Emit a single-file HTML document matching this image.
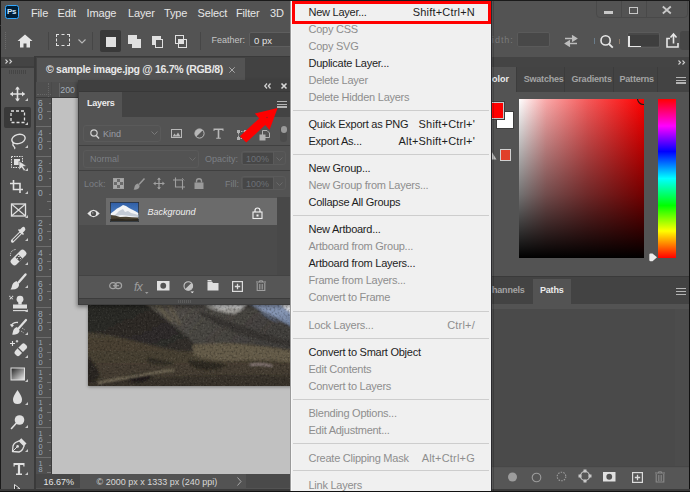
<!DOCTYPE html>
<html><head><meta charset="utf-8"><style>
*{margin:0;padding:0;box-sizing:border-box}
html,body{width:690px;height:492px;overflow:hidden;background:#535353;font-family:"Liberation Sans",sans-serif}
.a{position:absolute}
.t{position:absolute;white-space:nowrap;line-height:1}
svg{position:absolute;overflow:visible}
</style></head><body>
<div class="a" style="left:0;top:0;width:690px;height:25px;background:#535353"></div>
<div class="a" style="left:0;top:0;width:690px;height:1px;background:#1a1a1a"></div>
<div class="a" style="left:0;top:0;width:1px;height:492px;background:#1a1a1a"></div>
<div class="a" style="left:0;top:25px;width:690px;height:1px;background:#3c3c3c"></div>
<div class="a" style="left:1px;top:25px;width:689px;height:31px;background:#535353"></div>
<div class="a" style="left:1px;top:56px;width:689px;height:1px;background:#3a3a3a"></div>
<div class="a" style="left:5px;top:5px;width:14px;height:14px;border:1.2px solid #31a8ff;border-radius:2.5px;background:#001e36"></div>
<div class="t" style="left:7px;top:8px;font-size:8px;font-weight:bold;color:#d0e8ff;letter-spacing:-0.3px">Ps</div>
<div class="t" style="left:31px;top:8px;font-size:11px;color:#e6e6e6;letter-spacing:-0.15px">File</div>
<div class="t" style="left:57.5px;top:8px;font-size:11px;color:#e6e6e6;letter-spacing:-0.15px">Edit</div>
<div class="t" style="left:86.5px;top:8px;font-size:11px;color:#e6e6e6;letter-spacing:-0.15px">Image</div>
<div class="t" style="left:128px;top:8px;font-size:11px;color:#e6e6e6;letter-spacing:-0.15px">Layer</div>
<div class="t" style="left:164px;top:8px;font-size:11px;color:#e6e6e6;letter-spacing:-0.15px">Type</div>
<div class="t" style="left:197.5px;top:8px;font-size:11px;color:#e6e6e6;letter-spacing:-0.15px">Select</div>
<div class="t" style="left:236px;top:8px;font-size:11px;color:#e6e6e6;letter-spacing:-0.15px">Filter</div>
<div class="t" style="left:270px;top:8px;font-size:11px;color:#e6e6e6;letter-spacing:-0.15px">3D</div>
<div class="a" style="left:595.5px;top:-5px;width:92px;height:22.5px;border:1px solid #494949;border-radius:4px"></div>
<div class="a" style="left:621px;top:0;width:1px;height:17px;background:#494949"></div>
<div class="a" style="left:645.5px;top:0;width:1px;height:17px;background:#494949"></div>
<div class="a" style="left:603.5px;top:11px;width:9px;height:2.8px;background:#c8c8c8"></div>
<div class="a" style="left:629px;top:6.5px;width:9px;height:7.3px;border:1.6px solid #c8c8c8"></div>
<svg style="left:662px;top:5.5px" width="10" height="8"><path d="M0.8 0.5L8.8 7.5M8.8 0.5L0.8 7.5" stroke="#c8c8c8" stroke-width="1.8"/></svg>
<div class="a" style="left:5px;top:32px;width:2px;height:17px;border-left:1px dotted #6a6a6a"></div>
<svg style="left:17px;top:34px" width="16" height="14"><path d="M8 0.5L0.5 7H3V13.5H6.5V9.5H9.5V13.5H13V7H15.5Z" fill="#e6e6e6"/></svg>
<div class="a" style="left:48px;top:32px;width:1px;height:18px;background:#464646"></div>
<div class="a" style="left:56px;top:34px;width:14px;height:12px;border:1.3px dashed #e0e0e0"></div>
<svg style="left:78px;top:39px" width="8" height="5"><path d="M0.5 0.5L4 4L7.5 0.5" stroke="#b8b8b8" fill="none" stroke-width="1.1"/></svg>
<div class="a" style="left:92px;top:32px;width:1px;height:18px;background:#464646"></div>
<div class="a" style="left:100px;top:30px;width:21px;height:22px;background:#393939;border-radius:2px"></div>
<div class="a" style="left:106px;top:37px;width:10px;height:10px;background:#e0e0e0"></div>
<div class="a" style="left:128px;top:35px;width:9px;height:9px;background:#e0e0e0"></div>
<div class="a" style="left:132px;top:39px;width:9px;height:9px;background:#e0e0e0"></div>
<div class="a" style="left:152px;top:36px;width:9px;height:9px;background:#e0e0e0"></div>
<div class="a" style="left:155px;top:39px;width:8px;height:9px;background:#535353;border:1.3px solid #e0e0e0"></div>
<div class="a" style="left:175px;top:35px;width:9px;height:9px;border:1.2px solid #e0e0e0"></div>
<div class="a" style="left:178px;top:39px;width:9px;height:9px;border:1.2px solid #e0e0e0"></div>
<div class="a" style="left:178px;top:39px;width:6px;height:5px;background:#e0e0e0"></div>
<div class="a" style="left:200px;top:32px;width:1px;height:18px;background:#464646"></div>
<div class="t" style="left:211.5px;top:36.3px;font-size:9px;color:#c4c4c4">Feather:</div>
<div class="a" style="left:249.3px;top:31.8px;width:50px;height:15.5px;background:#484848;border:1px solid #5e5e5e;border-radius:2px"></div>
<div class="t" style="left:254px;top:36px;font-size:9.5px;color:#e4e4e4">0 px</div>
<div class="t" style="left:482.7px;top:36.3px;font-size:9px;color:#7a7a7a;letter-spacing:0.9px">Width:</div>
<div class="a" style="left:517px;top:32.4px;width:33px;height:14.8px;background:#484848;border:1px solid #5a5a5a;border-radius:2px"></div>
<svg style="left:564px;top:35px" width="14" height="12"><path d="M1 3.5H10M8 0.5L12.5 3.5L8 6.5M13 8.5H4M6 5.5L1.5 8.5L6 11.5" stroke="#bdbdbd" fill="#bdbdbd" stroke-width="1.5"/></svg>
<div class="a" style="left:594px;top:38px;width:1px;height:6px;background:#6a7c8a"></div>
<svg style="left:600px;top:35px" width="14" height="14"><circle cx="5.6" cy="5.4" r="4.6" stroke="#e6e6e6" stroke-width="1.6" fill="none"/><path d="M9 9L12.8 12.6" stroke="#e6e6e6" stroke-width="1.8"/></svg>
<div class="a" style="left:619px;top:39px;width:1px;height:5px;background:#8a7a6a"></div>
<div class="a" style="left:627px;top:32px;width:33px;height:16px;background:#484848;border:1px solid #5a5a5a;border-radius:2px"></div>
<div class="a" style="left:630px;top:35px;width:29px;height:11px;background:#3e3e3e"></div>
<div class="a" style="left:628px;top:36px;width:1.5px;height:11px;background:#e6e6e6"></div>
<div class="a" style="left:628px;top:45.5px;width:13px;height:1.5px;background:#e6e6e6"></div>
<svg style="left:666px;top:33px" width="13" height="15"><path d="M4 5.5H1V14H12V10" stroke="#e6e6e6" stroke-width="1.6" fill="none"/><path d="M7.5 10.5V2M4.5 4.5L7.5 1L10.5 4.5" stroke="#e6e6e6" stroke-width="1.6" fill="none"/></svg>
<div class="a" style="left:680px;top:31px;width:14px;height:19px;background:#474747;border-radius:3px"></div>
<div class="a" style="left:1px;top:56px;width:33px;height:436px;background:#535353"></div>
<div class="a" style="left:1px;top:57px;width:33px;height:9.2px;background:#444444"></div>
<svg style="left:5px;top:59.3px" width="8" height="5"><path d="M0.5 0.5L2.5 2.5L0.5 4.5M4.5 0.5L6.5 2.5L4.5 4.5" stroke="#d0d0d0" fill="none" stroke-width="1.1"/></svg>
<div class="a" style="left:1px;top:66.2px;width:33px;height:1.6px;background:#3e3e3e"></div>
<div class="a" style="left:9px;top:70.4px;width:17.5px;height:3.4px;background:repeating-linear-gradient(90deg,#454545 0 1px,transparent 1px 2px)"></div>
<div class="a" style="left:34px;top:56px;width:2px;height:436px;background:#3a3a3a"></div>
<div class="a" style="left:4px;top:107px;width:27px;height:21px;background:#393939;border-radius:2px"></div>
<svg style="left:0;top:0" width="36" height="492"><path d="M17.5 87V101M10.5 94H24.5" stroke="#e0e0e0" stroke-width="1.6"/><path d="M17.5 86.5L15 89.5H20ZM17.5 101.5L15 98.5H20ZM10 94L13 91.5V96.5ZM25 94L22 91.5V96.5Z" fill="#e0e0e0"/><path d="M28 101L28 98L25 101Z" fill="#c8c8c8"/><rect x="11" y="111" width="13.5" height="11.5" stroke="#e0e0e0" stroke-width="1.3" fill="none" stroke-dasharray="3 2"/><path d="M28 125L28 122L25 125Z" fill="#c8c8c8"/><ellipse cx="18.5" cy="139" rx="6.8" ry="4.6" stroke="#e0e0e0" stroke-width="1.4" fill="none" transform="rotate(-15 18.5 139)"/><path d="M13.5 142.5Q12 145 14 146.5Q15.5 148 14.5 149" stroke="#e0e0e0" stroke-width="1.3" fill="none"/><path d="M28 148L28 145L25 148Z" fill="#c8c8c8"/><rect x="11.5" y="156.5" width="11" height="11" stroke="#e0e0e0" stroke-width="1" fill="none" stroke-dasharray="1.5 1"/><rect x="14" y="159" width="6" height="6" fill="#e0e0e0"/><path d="M19 161L19 170L21.5 167.5L24 171L25.5 170L23.2 166.5L26.5 166Z" fill="#e0e0e0" stroke="#535353" stroke-width="0.6"/><path d="M28 171L28 168L25 171Z" fill="#c8c8c8"/><path d="M13.5 180V189.5H23M10 183.5H20V193" stroke="#e0e0e0" stroke-width="1.6" fill="none"/><path d="M28 194L28 191L25 194Z" fill="#c8c8c8"/><rect x="11.5" y="204" width="14" height="12" stroke="#e0e0e0" stroke-width="1.3" fill="none"/><path d="M11.5 204L25.5 216M25.5 204L11.5 216" stroke="#e0e0e0" stroke-width="1.1"/><path d="M28 218L28 215L25 218Z" fill="#c8c8c8"/><path d="M12.5 241L21 232.5" stroke="#e0e0e0" stroke-width="3.2" stroke-linecap="round"/><path d="M13 240.5L20.5 233" stroke="#535353" stroke-width="1.2"/><path d="M19 230.5L22 227.5Q24 226 25 228Q26 230 24.5 231L21.5 234Z" fill="#e0e0e0"/><path d="M18.5 229.5L23.5 234.5" stroke="#e0e0e0" stroke-width="1.6"/><path d="M28 241L28 238L25 241Z" fill="#c8c8c8"/><path d="M11.5 259.5L20.5 250.5Q22.5 248.5 24.5 250.5L25.5 251.5Q27.5 253.5 25.5 255.5L16.5 264.5Q14.5 266.5 12.5 264.5L11.5 263.5Q9.5 261.5 11.5 259.5Z" fill="#e0e0e0"/><path d="M15.5 257.5L18.5 254.5L22.5 258.5L19.5 261.5Z" fill="#535353"/><circle cx="18.5" cy="256.5" r="0.6" fill="#e0e0e0"/><circle cx="20.5" cy="258.5" r="0.6" fill="#e0e0e0"/><circle cx="17.5" cy="258.5" r="0.6" fill="#e0e0e0"/><circle cx="19.5" cy="256.3" r="0.5" fill="#e0e0e0"/><path d="M10.5 256Q10 250.5 15.5 249.5" stroke="#e0e0e0" stroke-width="1" stroke-dasharray="1 1" fill="none"/><path d="M28 265L28 262L25 265Z" fill="#c8c8c8"/><path d="M25.5 274.5L18.5 282.5" stroke="#e0e0e0" stroke-width="2.4" stroke-linecap="round"/><path d="M16.5 281Q12.5 282.5 12 286Q11.5 288.5 10.5 289.5Q15 290 17.5 288Q19.5 286 19 284Z" fill="#e0e0e0"/><path d="M28 288L28 285L25 288Z" fill="#c8c8c8"/><circle cx="20" cy="299.2" r="3.4" fill="#e0e0e0"/><path d="M18.3 301.5H21.7V304.5H18.3Z" fill="#e0e0e0"/><path d="M13 304.5H27V308.5H13Z" fill="#e0e0e0" /><path d="M13 310.6H27" stroke="#e0e0e0" stroke-width="1.1"/><path d="M9.5 296L13 299.5M13 296L9.5 299.5" stroke="#e0e0e0" stroke-width="1.2" stroke-dasharray="1 0.6"/><path d="M28 312L28 309L25 312Z" fill="#c8c8c8"/><path d="M26 320L18.5 328.5" stroke="#e0e0e0" stroke-width="2.2" stroke-linecap="round"/><path d="M17 327Q13.5 328 13 331.5Q12.5 334 12 334.5Q16 335 18 333.5Q20 331.5 19.5 330Z" fill="#e0e0e0"/><path d="M11 326Q13 322 18 322.5" stroke="#e0e0e0" stroke-width="1.3" fill="none"/><path d="M10 324L12 327.5L14 325Z" fill="#e0e0e0"/><path d="M21 331L24 333M22 328L25 330" stroke="#e0e0e0" stroke-width="0.8" stroke-dasharray="1 1"/><path d="M28 335L28 332L25 335Z" fill="#c8c8c8"/><path d="M16 350L22 344Q23.5 342.5 25 344L26.5 345.5Q28 347 26.5 348.5L19.5 355.5Q18 357 16.5 355.5L15 354Q13.5 352.5 16 350Z" fill="#e0e0e0"/><path d="M18 348L23 353" stroke="#535353" stroke-width="1.2"/><path d="M12.5 341V346M10 343.5H15M17 340V342.5M15.8 341.2H18.2" stroke="#e0e0e0" stroke-width="1.1"/><path d="M28 358L28 355L25 358Z" fill="#c8c8c8"/><defs><linearGradient id="gr" x1="0" y1="0" x2="1" y2="1"><stop offset="0" stop-color="#202020"/><stop offset="1" stop-color="#f0f0f0"/></linearGradient></defs><rect x="11" y="368" width="13.5" height="12" fill="url(#gr)" stroke="#e0e0e0" stroke-width="1"/><path d="M28 382L28 379L25 382Z" fill="#c8c8c8"/><path d="M17.5 390Q13 396.5 13 399.5Q13 404 17.5 404Q22 404 22 399.5Q22 396.5 17.5 390Z" fill="#e0e0e0"/><path d="M28 405L28 402L25 405Z" fill="#c8c8c8"/><circle cx="19.5" cy="420" r="4.8" fill="#e0e0e0"/><path d="M16 423.5L11.5 428.5" stroke="#e0e0e0" stroke-width="1.6" stroke-linecap="round"/><path d="M28 428L28 425L25 428Z" fill="#c8c8c8"/><path d="M12.5 451.5L13 446Q13.5 444 15.5 442.5L19.2 440.8L24.2 445.8L22.5 449.5Q21 451.5 19 452Z" fill="none" stroke="#e0e0e0" stroke-width="1.3" stroke-linejoin="round"/><path d="M12.8 451.2L17 447" stroke="#e0e0e0" stroke-width="1"/><circle cx="17.6" cy="446.4" r="1.3" fill="#e0e0e0"/><path d="M19 440.5L21.3 438.2L26.5 443.4L24.2 445.7Z" fill="#e0e0e0"/><path d="M28 452L28 449L25 452Z" fill="#c8c8c8"/><path d="M13.5 463H24.5V466.5H23.3V464.9H20.1V473.4H22V475H16V473.4H17.9V464.9H14.7V466.5H13.5Z" fill="#e0e0e0"/><path d="M28 475L28 472L25 475Z" fill="#c8c8c8"/><path d="M14.5 484.5V491L16.3 489.3L17.8 492L19 491.4L17.6 488.8H20Z" fill="#3a3a3a" stroke="#e0e0e0" stroke-width="1"/></svg>
<div class="a" style="left:36px;top:57px;width:455px;height:25px;background:#424242"></div>
<div class="a" style="left:36.8px;top:57.5px;width:208.2px;height:24.5px;background:#535353"></div>
<div class="t" style="left:46px;top:64.2px;font-size:10.5px;font-weight:bold;color:#e8e8e8;letter-spacing:-0.28px">&#169; sample image.jpg @ 16.7% (RGB/8)</div>
<svg style="left:229px;top:66.5px" width="6" height="6"><path d="M0.3 0.3L5.7 5.7M5.7 0.3L0.3 5.7" stroke="#a8a8a8" stroke-width="1"/></svg>
<div class="a" style="left:36px;top:82px;width:260px;height:15px;background:#4f4f4f"></div>
<div class="a" style="left:36px;top:97px;width:16px;height:377px;background:#4f4f4f"></div>
<div class="a" style="left:36px;top:97px;width:260px;height:1px;background:#3c3c3c"></div>
<div class="a" style="left:51px;top:98px;width:1px;height:376px;background:#3c3c3c"></div>
<div class="a" style="left:51px;top:82px;width:1px;height:15px;background:#4a4a4a"></div>
<div class="a" style="left:58.5px;top:83px;width:1px;height:14px;background:#646464"></div>
<div class="t" style="left:60.3px;top:86.3px;font-size:8.8px;color:#a4aeb8">200</div>
<div class="a" style="left:36px;top:95.5px;width:15px;height:1px;background:#6e6e6e"></div>
<div class="a" style="left:48.5px;top:103.0px;width:2.5px;height:1px;background:#767676"></div>
<div class="a" style="left:47px;top:110.6px;width:4px;height:1px;background:#767676"></div>
<div class="a" style="left:48.5px;top:118.1px;width:2.5px;height:1px;background:#767676"></div>
<div class="t" style="left:38px;top:98.7px;font-size:8.5px;color:#98a6b6">6</div>
<div class="t" style="left:38px;top:106.0px;font-size:8.5px;color:#98a6b6">0</div>
<div class="t" style="left:38px;top:113.3px;font-size:8.5px;color:#98a6b6">0</div>
<div class="a" style="left:36px;top:125.6px;width:15px;height:1px;background:#6e6e6e"></div>
<div class="a" style="left:48.5px;top:133.2px;width:2.5px;height:1px;background:#767676"></div>
<div class="a" style="left:47px;top:140.7px;width:4px;height:1px;background:#767676"></div>
<div class="a" style="left:48.5px;top:148.2px;width:2.5px;height:1px;background:#767676"></div>
<div class="t" style="left:38px;top:128.8px;font-size:8.5px;color:#98a6b6">4</div>
<div class="t" style="left:38px;top:136.1px;font-size:8.5px;color:#98a6b6">0</div>
<div class="t" style="left:38px;top:143.4px;font-size:8.5px;color:#98a6b6">0</div>
<div class="a" style="left:36px;top:155.8px;width:15px;height:1px;background:#6e6e6e"></div>
<div class="a" style="left:48.5px;top:163.3px;width:2.5px;height:1px;background:#767676"></div>
<div class="a" style="left:47px;top:170.8px;width:4px;height:1px;background:#767676"></div>
<div class="a" style="left:48.5px;top:178.4px;width:2.5px;height:1px;background:#767676"></div>
<div class="t" style="left:38px;top:159.0px;font-size:8.5px;color:#98a6b6">2</div>
<div class="t" style="left:38px;top:166.3px;font-size:8.5px;color:#98a6b6">0</div>
<div class="t" style="left:38px;top:173.6px;font-size:8.5px;color:#98a6b6">0</div>
<div class="a" style="left:36px;top:185.9px;width:15px;height:1px;background:#6e6e6e"></div>
<div class="a" style="left:48.5px;top:193.5px;width:2.5px;height:1px;background:#767676"></div>
<div class="a" style="left:47px;top:201.0px;width:4px;height:1px;background:#767676"></div>
<div class="a" style="left:48.5px;top:208.5px;width:2.5px;height:1px;background:#767676"></div>
<div class="t" style="left:38px;top:189.1px;font-size:8.5px;color:#98a6b6">0</div>
<div class="a" style="left:36px;top:216.1px;width:15px;height:1px;background:#6e6e6e"></div>
<div class="a" style="left:48.5px;top:223.6px;width:2.5px;height:1px;background:#767676"></div>
<div class="a" style="left:47px;top:231.1px;width:4px;height:1px;background:#767676"></div>
<div class="a" style="left:48.5px;top:238.7px;width:2.5px;height:1px;background:#767676"></div>
<div class="t" style="left:38px;top:219.3px;font-size:8.5px;color:#98a6b6">2</div>
<div class="t" style="left:38px;top:226.6px;font-size:8.5px;color:#98a6b6">0</div>
<div class="t" style="left:38px;top:233.9px;font-size:8.5px;color:#98a6b6">0</div>
<div class="a" style="left:36px;top:246.2px;width:15px;height:1px;background:#6e6e6e"></div>
<div class="a" style="left:48.5px;top:253.7px;width:2.5px;height:1px;background:#767676"></div>
<div class="a" style="left:47px;top:261.3px;width:4px;height:1px;background:#767676"></div>
<div class="a" style="left:48.5px;top:268.8px;width:2.5px;height:1px;background:#767676"></div>
<div class="t" style="left:38px;top:249.4px;font-size:8.5px;color:#98a6b6">4</div>
<div class="t" style="left:38px;top:256.7px;font-size:8.5px;color:#98a6b6">0</div>
<div class="t" style="left:38px;top:264.0px;font-size:8.5px;color:#98a6b6">0</div>
<div class="a" style="left:36px;top:276.3px;width:15px;height:1px;background:#6e6e6e"></div>
<div class="a" style="left:48.5px;top:283.9px;width:2.5px;height:1px;background:#767676"></div>
<div class="a" style="left:47px;top:291.4px;width:4px;height:1px;background:#767676"></div>
<div class="a" style="left:48.5px;top:298.9px;width:2.5px;height:1px;background:#767676"></div>
<div class="t" style="left:38px;top:279.5px;font-size:8.5px;color:#98a6b6">6</div>
<div class="t" style="left:38px;top:286.8px;font-size:8.5px;color:#98a6b6">0</div>
<div class="t" style="left:38px;top:294.1px;font-size:8.5px;color:#98a6b6">0</div>
<div class="a" style="left:36px;top:306.5px;width:15px;height:1px;background:#6e6e6e"></div>
<div class="a" style="left:48.5px;top:314.0px;width:2.5px;height:1px;background:#767676"></div>
<div class="a" style="left:47px;top:321.6px;width:4px;height:1px;background:#767676"></div>
<div class="a" style="left:48.5px;top:329.1px;width:2.5px;height:1px;background:#767676"></div>
<div class="t" style="left:38px;top:309.7px;font-size:8.5px;color:#98a6b6">8</div>
<div class="t" style="left:38px;top:317.0px;font-size:8.5px;color:#98a6b6">0</div>
<div class="t" style="left:38px;top:324.3px;font-size:8.5px;color:#98a6b6">0</div>
<div class="a" style="left:36px;top:336.6px;width:15px;height:1px;background:#6e6e6e"></div>
<div class="a" style="left:48.5px;top:344.2px;width:2.5px;height:1px;background:#767676"></div>
<div class="a" style="left:47px;top:351.7px;width:4px;height:1px;background:#767676"></div>
<div class="a" style="left:48.5px;top:359.2px;width:2.5px;height:1px;background:#767676"></div>
<div class="t" style="left:38.5px;top:339.1px;font-size:7.5px;color:#98a6b6">1</div>
<div class="t" style="left:38.5px;top:345.7px;font-size:7.5px;color:#98a6b6">0</div>
<div class="t" style="left:38.5px;top:352.3px;font-size:7.5px;color:#98a6b6">0</div>
<div class="t" style="left:38.5px;top:358.9px;font-size:7.5px;color:#98a6b6">0</div>
<div class="a" style="left:36px;top:366.8px;width:15px;height:1px;background:#6e6e6e"></div>
<div class="a" style="left:48.5px;top:374.3px;width:2.5px;height:1px;background:#767676"></div>
<div class="a" style="left:47px;top:381.8px;width:4px;height:1px;background:#767676"></div>
<div class="a" style="left:48.5px;top:389.4px;width:2.5px;height:1px;background:#767676"></div>
<div class="t" style="left:38.5px;top:369.3px;font-size:7.5px;color:#98a6b6">1</div>
<div class="t" style="left:38.5px;top:375.9px;font-size:7.5px;color:#98a6b6">2</div>
<div class="t" style="left:38.5px;top:382.5px;font-size:7.5px;color:#98a6b6">0</div>
<div class="t" style="left:38.5px;top:389.1px;font-size:7.5px;color:#98a6b6">0</div>
<div class="a" style="left:36px;top:396.9px;width:15px;height:1px;background:#6e6e6e"></div>
<div class="a" style="left:48.5px;top:404.4px;width:2.5px;height:1px;background:#767676"></div>
<div class="a" style="left:47px;top:412.0px;width:4px;height:1px;background:#767676"></div>
<div class="a" style="left:48.5px;top:419.5px;width:2.5px;height:1px;background:#767676"></div>
<div class="t" style="left:38.5px;top:399.4px;font-size:7.5px;color:#98a6b6">1</div>
<div class="t" style="left:38.5px;top:406.0px;font-size:7.5px;color:#98a6b6">4</div>
<div class="t" style="left:38.5px;top:412.6px;font-size:7.5px;color:#98a6b6">0</div>
<div class="t" style="left:38.5px;top:419.2px;font-size:7.5px;color:#98a6b6">0</div>
<div class="a" style="left:36px;top:427.0px;width:15px;height:1px;background:#6e6e6e"></div>
<div class="a" style="left:48.5px;top:434.6px;width:2.5px;height:1px;background:#767676"></div>
<div class="a" style="left:47px;top:442.1px;width:4px;height:1px;background:#767676"></div>
<div class="a" style="left:48.5px;top:449.6px;width:2.5px;height:1px;background:#767676"></div>
<div class="t" style="left:38.5px;top:429.5px;font-size:7.5px;color:#98a6b6">1</div>
<div class="t" style="left:38.5px;top:436.1px;font-size:7.5px;color:#98a6b6">6</div>
<div class="t" style="left:38.5px;top:442.7px;font-size:7.5px;color:#98a6b6">0</div>
<div class="t" style="left:38.5px;top:449.3px;font-size:7.5px;color:#98a6b6">0</div>
<div class="a" style="left:36px;top:457.2px;width:15px;height:1px;background:#6e6e6e"></div>
<div class="a" style="left:48.5px;top:464.7px;width:2.5px;height:1px;background:#767676"></div>
<div class="a" style="left:47px;top:472.2px;width:4px;height:1px;background:#767676"></div>
<div class="a" style="left:48.5px;top:479.8px;width:2.5px;height:1px;background:#767676"></div>
<div class="t" style="left:38.5px;top:459.7px;font-size:7.5px;color:#98a6b6">1</div>
<div class="t" style="left:38.5px;top:466.3px;font-size:7.5px;color:#98a6b6">8</div>
<div class="t" style="left:38.5px;top:472.9px;font-size:7.5px;color:#98a6b6">0</div>
<div class="t" style="left:38.5px;top:479.5px;font-size:7.5px;color:#98a6b6">0</div>
<div class="a" style="left:36px;top:82px;width:15px;height:15px;background:#4f4f4f"></div>
<div class="a" style="left:37px;top:94px;width:14px;height:1px;border-top:1px dotted #666"></div>
<div class="a" style="left:48px;top:83px;width:1px;height:14px;border-left:1px dotted #666"></div>
<div class="a" style="left:52px;top:98px;width:240px;height:376.4px;background:#c1c1c1"></div>
<div class="a" style="left:88px;top:305px;width:205px;height:81px;box-shadow:0 1px 3px rgba(0,0,0,.35)"></div>
<svg style="left:88px;top:305px" width="205" height="81" viewBox="0 0 205 81">
<defs>
<linearGradient id="gm" x1="0" y1="0" x2="1" y2="0.3"><stop offset="0" stop-color="#5a554b"/><stop offset="0.5" stop-color="#4a4743"/><stop offset="1" stop-color="#42403d"/></linearGradient>
<linearGradient id="gd" x1="0" y1="0" x2="1" y2="1"><stop offset="0" stop-color="#2a2927"/><stop offset="1" stop-color="#312e2a"/></linearGradient>
<linearGradient id="gb" x1="0" y1="0" x2="0" y2="1"><stop offset="0" stop-color="#98a8c8"/><stop offset="1" stop-color="#6a7a96"/></linearGradient>
<linearGradient id="gg" x1="0" y1="0" x2="0" y2="1"><stop offset="0" stop-color="#4f4737"/><stop offset="1" stop-color="#423b2f"/></linearGradient>
<filter id="nz" x="0" y="0" width="100%" height="100%"><feTurbulence type="fractalNoise" baseFrequency="0.5" numOctaves="2" seed="11"/><feColorMatrix values="0 0 0 0 0  0 0 0 0 0  0 0 0 0 0  0 0 0 -2.6 1.45"/></filter>
<filter id="nw" x="0" y="0" width="100%" height="100%"><feTurbulence type="fractalNoise" baseFrequency="0.6" numOctaves="2" seed="4"/><feColorMatrix values="0 0 0 0 1  0 0 0 0 1  0 0 0 0 0.9  0 0 0 2.6 -1.45"/></filter>
<filter id="bl" x="-5%" y="-5%" width="110%" height="110%"><feGaussianBlur stdDeviation="0.9"/></filter>
<clipPath id="cp"><rect width="205" height="81"/></clipPath>
</defs>
<g clip-path="url(#cp)"><g filter="url(#bl)">
<rect x="-5" y="-5" width="215" height="91" fill="url(#gg)"/>
<path d="M52 -5H210V46Q175 40 140 38Q118 39 106 39Q80 15 52 -5Z" fill="url(#gm)"/>
<path d="M64 -3L70 -3L86 17L82 17Z" fill="#625b4c"/>
<path d="M76 -3L82 -3L94 20L90 20Z" fill="#5f594b"/>
<path d="M112 6Q135 14 165 25Q188 33 210 38V44Q180 37 160 32Q130 22 110 8Z" fill="#383633"/>
<path d="M-5 -5H52Q80 15 103 35Q109 41 108 46Q95 47 75 43Q50 37 25 31Q10 28 -5 27Z" fill="url(#gd)"/>
<path d="M104 40Q125 37 150 39Q185 42 210 47V58Q175 54 140 56Q115 55 106 50Z" fill="#655c49"/>
<path d="M114 -5H162Q156 6 146 9Q134 8 124 4Q116 1 114 -5Z" fill="#9d9b97"/>
<path d="M120 -2Q128 3 136 4Q144 3 150 -1Z" fill="#d4d4d4"/>
<path d="M140 1Q146 4 152 3Q156 1 158 -2Z" fill="#e0e0e0"/>
<path d="M156 -5H210V25Q192 15 178 8Q165 1 156 -5Z" fill="url(#gb)"/>
<path d="M170 5Q182 11 192 18Q180 15 170 5Z" fill="#5a6780"/>
<path d="M189 -5H210V12Q198 6 189 -5Z" fill="#eef0f4"/>
<path d="M-5 47Q8 58 12 70Q8 78 -5 81Z" fill="#2a2620"/>
<path d="M100 55Q120 56 140 60Q130 66 115 65Q102 63 100 55Z" fill="#2e2a23"/>
<path d="M58 52Q75 55 88 58Q75 62 60 58Z" fill="#332e26"/>
<path d="M-5 77Q50 73 100 71Q150 69 210 71V86H-5Z" fill="#38322a"/>
<path d="M38 71Q52 67 64 69Q63 77 50 78Q40 78 38 71Z" fill="#221f1a"/>
<path d="M10 78Q35 73 60 69Q75 66 86 65" stroke="#8a806a" stroke-width="1.3" fill="none"/>
<path d="M162 60Q172 58 184 61" stroke="#a09090" stroke-width="1.6" fill="none"/>
</g><rect width="205" height="81" fill="#000" filter="url(#nz)" opacity="0.28"/><rect width="205" height="81" fill="#fff" filter="url(#nw)" opacity="0.12"/></g>
</svg>
<div class="a" style="left:36px;top:474.4px;width:260px;height:14px;background:#535353"></div>
<div class="a" style="left:36px;top:474.4px;width:44px;height:14px;background:#474747"></div>
<div class="a" style="left:245.8px;top:474.4px;width:50px;height:14px;background:#4a4a4a"></div>
<div class="t" style="left:43.5px;top:477.5px;font-size:9px;color:#e4e4e4">16.67%</div>
<div class="t" style="left:96.5px;top:477.5px;font-size:9px;color:#d8d8d8">&#169; 2000 px x 1333 px (240 ppi)</div>
<svg style="left:237px;top:477px" width="5" height="9"><path d="M0.5 0.5L4 4.5L0.5 8.5" stroke="#a8a8a8" fill="none"/></svg>
<div class="a" style="left:36px;top:489px;width:260px;height:3px;background:#3a3a3a"></div>
<div class="a" style="left:78px;top:79.5px;width:221px;height:225.2px;background:#535353;border-left:1px solid #3e3e3e;border-bottom:1px solid #3e3e3e;box-shadow:-1px 2px 4px rgba(0,0,0,.4)"></div>
<div class="a" style="left:79px;top:80px;width:220px;height:11px;background:#3f3f3f"></div>
<div class="a" style="left:79px;top:91px;width:220px;height:1px;background:#383838"></div>
<div class="a" style="left:79px;top:92px;width:220px;height:25px;background:#434343"></div>
<div class="a" style="left:79px;top:92px;width:43px;height:25px;background:#535353"></div>
<div class="t" style="left:87px;top:99.3px;font-size:9px;font-weight:bold;color:#ececec;letter-spacing:-0.25px">Layers</div>
<svg style="left:264px;top:83px" width="7" height="6"><path d="M3 0.5L0.8 3L3 5.5M6.5 0.5L4.3 3L6.5 5.5" stroke="#d0d0d0" fill="none" stroke-width="1.3"/></svg>
<svg style="left:281px;top:83px" width="6" height="6"><path d="M0.5 0.5L5.5 5.5M5.5 0.5L0.5 5.5" stroke="#d8d8d8" stroke-width="1.6"/></svg>
<div class="a" style="left:277px;top:101px;width:9.5px;height:7px;background:repeating-linear-gradient(180deg,#b4b4b4 0 1.2px,#434343 1.2px 2.75px)"></div>
<div class="a" style="left:82.5px;top:125px;width:78px;height:16.8px;border:1px solid #5a5a5a;border-radius:3px;background:#535353"></div>
<svg style="left:90px;top:129px" width="10" height="11"><circle cx="4" cy="4" r="3.2" stroke="#cfcfcf" stroke-width="1.2" fill="none"/><path d="M6.3 6.5L9 9.5" stroke="#cfcfcf" stroke-width="1.5"/></svg>
<div class="t" style="left:103px;top:129.5px;font-size:9px;color:#9a9ea4">Kind</div>
<svg style="left:151px;top:131px" width="7" height="5"><path d="M0.5 0.5L3.5 3.5L6.5 0.5" stroke="#7a7a7a" fill="none"/></svg>
<div class="a" style="left:171px;top:129px;width:11px;height:9px;border:1px solid #b8b8b8"></div>
<svg style="left:172px;top:132px" width="9" height="5"><path d="M0.5 4.5L2.5 1.5L4 3.5L6 0.5L8.5 4.5Z" fill="#b8b8b8"/></svg>
<svg style="left:194px;top:128px" width="11" height="11"><circle cx="5.5" cy="5.5" r="4.6" fill="#b8b8b8"/><path d="M8.8 2.2A4.6 4.6 0 0 1 2.2 8.8Z" fill="#535353"/><circle cx="5.5" cy="5.5" r="4.6" fill="none" stroke="#b8b8b8" stroke-width="1"/></svg>
<svg style="left:213px;top:128px" width="11" height="11"><path d="M0.5 0.5H10.5V3H9.5V2H6.3V9.8H7.8V10.8H3.2V9.8H4.7V2H1.5V3H0.5Z" fill="#b8b8b8"/></svg>
<svg style="left:237px;top:130px" width="10" height="10"><rect x="1.5" y="1.5" width="7" height="7" stroke="#b0b0b0" fill="none" stroke-dasharray="1.5 1"/><rect x="0" y="0" width="3" height="3" fill="#b0b0b0"/><rect x="7" y="0" width="3" height="3" fill="#b0b0b0"/><rect x="0" y="7" width="3" height="3" fill="#b0b0b0"/><rect x="7" y="7" width="3" height="3" fill="#b0b0b0"/></svg>
<svg style="left:259px;top:130px" width="11" height="11"><path d="M3.5 0.5H8L10.5 3V7.5H3.5Z" fill="none" stroke="#b0b0b0"/><rect x="0.5" y="4.5" width="6" height="6" fill="#b0b0b0"/></svg>
<div class="a" style="left:280px;top:125.5px;width:7px;height:16px;border-radius:3.5px;background:#4b4b4b"></div>
<div class="a" style="left:280.5px;top:126px;width:6.5px;height:6.5px;border-radius:50%;background:#9a9a9a"></div>
<div class="a" style="left:79px;top:145px;width:220px;height:1px;background:#404040"></div>
<div class="a" style="left:82.5px;top:150.3px;width:116px;height:17.5px;border:1px solid #5a5a5a;border-radius:3px"></div>
<div class="t" style="left:90px;top:154.5px;font-size:9px;color:#7c7f84">Normal</div>
<svg style="left:189px;top:157px" width="7" height="5"><path d="M0.5 0.5L3.5 3.5L6.5 0.5" stroke="#6a6a6a" fill="none"/></svg>
<div class="t" style="left:205px;top:155px;font-size:9px;color:#7c7f84">Opacity:</div>
<div class="a" style="left:240.6px;top:150.6px;width:45.8px;height:14.7px;border:1px solid #5a5a5a;border-radius:3px"></div>
<div class="a" style="left:242.6px;top:152.6px;width:30px;height:11.2px;background:#474747"></div>
<div class="a" style="left:273.3px;top:151.6px;width:1px;height:12.7px;background:#5a5a5a"></div>
<div class="t" style="left:246px;top:155px;font-size:9px;color:#6c7076">100%</div>
<svg style="left:276px;top:157px" width="7" height="5"><path d="M0.5 0.5L3.5 3.5L6.5 0.5" stroke="#6a6a6a" fill="none"/></svg>
<div class="a" style="left:79px;top:170px;width:220px;height:1px;background:#404040"></div>
<div class="t" style="left:84px;top:180px;font-size:9px;color:#7c7f84">Lock:</div>
<svg style="left:113px;top:178px" width="11" height="11"><rect x="0.5" y="0.5" width="10" height="10" fill="#6a6a6a" stroke="#a0a0a0"/><rect x="1" y="1" width="3" height="3" fill="#a8a8a8"/><rect x="7" y="1" width="3" height="3" fill="#a8a8a8"/><rect x="4" y="4" width="3" height="3" fill="#a8a8a8"/><rect x="1" y="7" width="3" height="3" fill="#a8a8a8"/><rect x="7" y="7" width="3" height="3" fill="#a8a8a8"/></svg>
<svg style="left:133px;top:178px" width="12" height="12"><path d="M11.5 0.5L6 6.5" stroke="#9a9a9a" stroke-width="1.5"/><path d="M5 5.5Q2 6 1.5 9Q1.2 11 0.5 11.5Q4 12 5.5 10.5Q7 9 6.5 7.5Z" fill="#9a9a9a"/></svg>
<svg style="left:153px;top:177px" width="12" height="13"><path d="M6 1V12M0.8 6.5H11.2" stroke="#a0a0a0" stroke-width="1.2"/><path d="M6 0.5L4 2.8H8ZM6 12.5L4 10.2H8ZM0.3 6.5L2.6 4.5V8.5ZM11.7 6.5L9.4 4.5V8.5Z" fill="#a0a0a0"/></svg>
<svg style="left:173px;top:177px" width="14" height="13"><path d="M2.5 0.5V10H12M0 3H9.5V12.5" stroke="#a0a0a0" stroke-width="1.1" fill="none"/><path d="M9 1L12 4" stroke="#a0a0a0" stroke-width="1" stroke-dasharray="1 1"/></svg>
<svg style="left:194px;top:178px" width="10" height="11"><path d="M2.5 4.5V3Q2.5 0.8 5 0.8Q7.5 0.8 7.5 3V4.5" stroke="#9a9a9a" stroke-width="1.4" fill="none"/><rect x="0.5" y="4.5" width="9" height="6.5" fill="#9a9a9a"/></svg>
<div class="t" style="left:225px;top:180px;font-size:9px;color:#7c7f84">Fill:</div>
<div class="a" style="left:240.6px;top:175.5px;width:45.8px;height:14.8px;border:1px solid #5a5a5a;border-radius:3px"></div>
<div class="a" style="left:242.6px;top:177.5px;width:30px;height:11.1px;background:#474747"></div>
<div class="a" style="left:273.3px;top:176.5px;width:1px;height:12.8px;background:#5a5a5a"></div>
<div class="t" style="left:246px;top:180.3px;font-size:9px;color:#6c7076">100%</div>
<svg style="left:276px;top:182px" width="7" height="5"><path d="M0.5 0.5L3.5 3.5L6.5 0.5" stroke="#6a6a6a" fill="none"/></svg>
<div class="a" style="left:79px;top:195px;width:220px;height:30px;background:#535353"></div>
<div class="a" style="left:79px;top:225px;width:220px;height:50px;background:#4b4b4b"></div>
<div class="a" style="left:276.5px;top:196.7px;width:14px;height:28.3px;background:#484848"></div>
<div class="a" style="left:276.5px;top:225px;width:14px;height:50px;background:#484848"></div>
<div class="a" style="left:106px;top:198px;width:170.5px;height:27px;background:#6b6b6b"></div>
<svg style="left:87px;top:208.5px" width="13" height="9"><path d="M0.3 4.5Q6.5 -2.8 12.7 4.5Q6.5 11.8 0.3 4.5Z" fill="#e4e4e4"/><circle cx="6.5" cy="4.5" r="2.6" fill="#4e4e4e"/><circle cx="5.8" cy="3.9" r="0.8" fill="#9a9a9a"/></svg>
<svg style="left:110px;top:202px" width="29" height="20" viewBox="0 0 29 20">
<defs><linearGradient id="sky" x1="0" y1="0" x2="0" y2="1"><stop offset="0" stop-color="#2f5fa6"/><stop offset="1" stop-color="#5f8fd0"/></linearGradient>
<filter id="tb"><feGaussianBlur stdDeviation="0.35"/></filter></defs>
<rect width="29" height="20" fill="#2a2a2a"/>
<g filter="url(#tb)">
<rect x="0.7" y="0.7" width="27.6" height="18.6" fill="url(#sky)"/>
<path d="M0.7 11.5L4 9L7 6.5L10 5L13 3L16 4L19 6L22 7.5L25 9L28.3 11V17L0.7 17Z" fill="#f2f4f6"/>
<path d="M9 9L13 7L15 10L18 9L21 11L25 12L28.3 13V15L20 14L12 13L4 14Z" fill="#c4ccd6"/>
<path d="M0.7 13L5 13.5L10 15L16 14.8L22 15.2L28.3 15.5V19.3H0.7Z" fill="#4a4233"/>
<path d="M0.7 17L8 16.5L16 17.5L28.3 17V19.3H0.7Z" fill="#2e2a22"/>
</g>
</svg>
<div class="t" style="left:147.5px;top:208px;font-size:9px;font-style:italic;color:#f0f0f0">Background</div>
<svg style="left:252px;top:207px" width="11" height="12"><path d="M3 5V3.5Q3 1 5.5 1Q8 1 8 3.5V5" stroke="#f0f0f0" stroke-width="1.2" fill="none"/><rect x="1" y="5" width="9" height="6.5" fill="none" stroke="#f0f0f0" stroke-width="1.1"/><rect x="4.5" y="7.5" width="2" height="2" fill="#f0f0f0"/></svg>
<div class="a" style="left:79px;top:275px;width:220px;height:1px;background:#434343"></div>
<div class="a" style="left:79px;top:276px;width:220px;height:21.5px;background:#565656"></div>
<div class="a" style="left:79px;top:297.5px;width:220px;height:1px;background:#3c3c3c"></div>
<div class="a" style="left:79px;top:298.5px;width:220px;height:5.5px;background:#4a4a4a"></div>
<div class="a" style="left:178px;top:299.5px;width:14px;height:3px;background:repeating-linear-gradient(90deg,#5c5c5c 0 1px,transparent 1px 2px)"></div>
<svg style="left:108.5px;top:281.8px" width="14" height="8"><rect x="0.7" y="0.7" width="6.6" height="6" rx="3" stroke="#a4a4a4" stroke-width="1.2" fill="none"/><rect x="5.8" y="0.7" width="6.8" height="6" rx="3" stroke="#a4a4a4" stroke-width="1.2" fill="none"/><path d="M4 3.7H10" stroke="#a4a4a4" stroke-width="1.1"/></svg>
<div class="t" style="left:134px;top:280.5px;font-size:12px;font-style:italic;color:#9c9c9c;letter-spacing:-0.5px">fx</div>
<svg style="left:145px;top:292px" width="4" height="3"><path d="M0 0H3.5L1.75 2Z" fill="#9c9c9c"/></svg>
<svg style="left:157px;top:281px" width="13" height="10"><rect x="0" y="0" width="12.5" height="9.5" fill="#e0e0e0"/><circle cx="6.25" cy="4.75" r="2.9" fill="#535353"/></svg>
<svg style="left:183px;top:281px" width="13" height="13"><circle cx="5.3" cy="5" r="4.3" fill="none" stroke="#c4c4c4" stroke-width="1.1"/><path d="M8.4 1.9A4.3 4.3 0 0 1 2.2 8.1Z" fill="#c4c4c4"/><path d="M7.5 10.5H11L9.25 12.2Z" fill="#e8e8e8"/></svg>
<svg style="left:207px;top:280px" width="12" height="11"><path d="M0.5 1.5H5L6 3H11.5V10.5H0.5Z" fill="#dedede"/><path d="M0.5 0.5H4.5" stroke="#dedede"/></svg>
<svg style="left:232px;top:280.5px" width="11" height="11"><rect x="0.6" y="0.6" width="9.8" height="9.8" fill="none" stroke="#dcdcdc" stroke-width="1.2"/><path d="M5.5 2.8V8.2M2.8 5.5H8.2" stroke="#dcdcdc" stroke-width="1.3"/></svg>
<svg style="left:256px;top:280px" width="10" height="11"><path d="M0 2H10M3.5 2V0.8H6.5V2" stroke="#a0a0a0" stroke-width="1" fill="none"/><path d="M1.2 3V10.5H8.8V3M3.8 4V9.5M6.2 4V9.5" stroke="#a0a0a0" stroke-width="1.1" fill="none"/></svg>
<svg style="left:0;top:0" width="690" height="492"><path d="M277.6 108.1L254.9 113.5L259.2 118.4L239.9 136.3L246.3 142.6L265.2 125.0L269.5 129.9Z" fill="#fe0000"/><circle cx="267" cy="117.5" r="0.7" fill="#8a2020"/></svg>
<div class="a" style="left:491px;top:56px;width:199px;height:436px;background:#535353"></div>
<div class="a" style="left:491px;top:57px;width:199px;height:10.4px;background:#444444"></div>
<svg style="left:677.5px;top:59.5px" width="8" height="5"><path d="M0.5 0.5L2.5 2.5L0.5 4.5M4.5 0.5L6.5 2.5L4.5 4.5" stroke="#d0d0d0" fill="none" stroke-width="1.1"/></svg>
<div class="a" style="left:491px;top:67.4px;width:199px;height:25px;background:#434343"></div>
<div class="a" style="left:491px;top:67.4px;width:25px;height:25px;background:#535353"></div>
<div class="a" style="left:564.2px;top:67.4px;width:1px;height:25px;background:#3c3c3c"></div>
<div class="a" style="left:612.5px;top:67.4px;width:1px;height:25px;background:#3c3c3c"></div>
<div class="a" style="left:656.5px;top:67.4px;width:1px;height:25px;background:#3c3c3c"></div>
<div class="a" style="left:516px;top:67.4px;width:1px;height:25px;background:#3c3c3c"></div>
<div class="t" style="left:485.5px;top:74.8px;font-size:9px;font-weight:bold;color:#ececec;letter-spacing:0px">Color</div>
<div class="t" style="left:523.7px;top:74.8px;font-size:9px;font-weight:bold;color:#a4a4a4;letter-spacing:-0.2px">Swatches</div>
<div class="t" style="left:571.5px;top:74.8px;font-size:9px;font-weight:bold;color:#a4a4a4;letter-spacing:-0.2px">Gradients</div>
<div class="t" style="left:619.5px;top:74.8px;font-size:9px;font-weight:bold;color:#a4a4a4;letter-spacing:-0.2px">Patterns</div>
<div class="a" style="left:676px;top:77px;width:9.5px;height:7px;background:repeating-linear-gradient(180deg,#b4b4b4 0 1.2px,#434343 1.2px 2.75px)"></div>
<div class="a" style="left:495.5px;top:111.2px;width:18px;height:17.5px;background:#ffffff;border:1px solid #3c3c3c"></div>
<div class="a" style="left:487px;top:102px;width:17px;height:16.5px;background:#ff0000;border:1px solid #c8c8c8;box-shadow:0 0 0 1px #3c3c3c"></div>
<div class="a" style="left:499.5px;top:149px;width:11.5px;height:11.5px;background:#e0402a;border:1px solid #d0d0d0"></div>
<svg style="left:489px;top:150px" width="8" height="10"><path d="M2 0.5L7.5 9.5H0Z" fill="#bcbcbc"/></svg>
<div class="a" style="left:519px;top:99px;width:124.5px;height:158.5px;background:linear-gradient(to top,#000 0%,rgba(0,0,0,0.55) 40%,rgba(0,0,0,0) 100%),linear-gradient(to right,#fff 0%,#fba8a8 22%,#f65a5a 55%,#f00 100%)"></div>
<svg style="left:631px;top:99px;overflow:hidden" width="12.5" height="8"><circle cx="12.5" cy="-0.5" r="6" stroke="#1a1a1a" stroke-width="1.1" fill="none"/></svg>
<div class="a" style="left:658px;top:99px;width:18px;height:158.5px;background:linear-gradient(to bottom,#f00 0%,#f0f 17%,#00f 33%,#0ff 50%,#0f0 67%,#ff0 83%,#f00 100%)"></div>
<svg style="left:649px;top:253px" width="9" height="9"><path d="M1.5 0.5H3.5L8 4.3L3.5 8.3H1.5Q0.3 8.3 0.3 7V1.8Q0.3 0.5 1.5 0.5Z" fill="#ececec"/></svg>
<div class="a" style="left:491px;top:276.3px;width:199px;height:1px;background:#3a3a3a"></div>
<div class="a" style="left:491px;top:277.3px;width:199px;height:27.2px;background:#434343"></div>
<div class="a" style="left:533px;top:278.8px;width:38px;height:25.7px;background:#535353"></div>
<div class="t" style="left:485.7px;top:286px;font-size:9px;font-weight:bold;color:#a4a4a4;letter-spacing:-0.2px">Channels</div>
<div class="a" style="left:485px;top:280px;width:6px;height:20px;background:#434343"></div>
<div class="t" style="left:540px;top:286px;font-size:9px;font-weight:bold;color:#ececec;letter-spacing:-0.2px">Paths</div>
<div class="a" style="left:676px;top:288px;width:9.5px;height:7px;background:repeating-linear-gradient(180deg,#b4b4b4 0 1.2px,#434343 1.2px 2.75px)"></div>
<div class="a" style="left:491px;top:304.4px;width:199px;height:162px;background:#4a4a4a"></div>
<div class="a" style="left:491px;top:304.4px;width:199px;height:4.4px;background:#535353"></div>
<div class="a" style="left:675px;top:308.8px;width:14px;height:157.4px;background:#4c4c4c"></div>
<div class="a" style="left:491px;top:466px;width:199px;height:1px;background:#474747"></div>
<div class="a" style="left:491px;top:467.5px;width:199px;height:21px;background:#565656"></div>
<div class="a" style="left:688.6px;top:56px;width:0.8px;height:436px;background:#2e2e2e"></div>
<div class="a" style="left:689.3px;top:0;width:0.7px;height:492px;background:#111"></div>
<svg style="left:507px;top:472px" width="11" height="11"><circle cx="5.5" cy="5" r="4.5" fill="#9c9c9c"/></svg>
<svg style="left:531px;top:472px" width="11" height="11"><circle cx="5.5" cy="5.5" r="4.3" fill="none" stroke="#9c9c9c" stroke-width="1.1"/></svg>
<svg style="left:556px;top:471px" width="11" height="11"><circle cx="5.5" cy="5.5" r="4.3" fill="none" stroke="#9c9c9c" stroke-width="1.1" stroke-dasharray="1.5 1.2"/></svg>
<svg style="left:578px;top:469px" width="14" height="14"><circle cx="7" cy="7" r="4.5" fill="none" stroke="#c8c8c8" stroke-width="1.2"/><rect x="5.5" y="0.5" width="3" height="3" fill="#c8c8c8"/><rect x="5.5" y="10.5" width="3" height="3" fill="#c8c8c8"/><rect x="0.5" y="5.5" width="3" height="3" fill="#c8c8c8"/><rect x="10.5" y="5.5" width="3" height="3" fill="#c8c8c8"/></svg>
<svg style="left:603px;top:472px" width="13" height="10"><rect x="0" y="0" width="12.5" height="9.5" fill="#e0e0e0"/><circle cx="6.25" cy="4.75" r="2.9" fill="#535353"/></svg>
<svg style="left:632px;top:471.5px" width="11" height="11"><rect x="0.6" y="0.6" width="9.8" height="9.8" fill="none" stroke="#dcdcdc" stroke-width="1.2"/><path d="M5.5 2.8V8.2M2.8 5.5H8.2" stroke="#dcdcdc" stroke-width="1.3"/></svg>
<svg style="left:655px;top:471px" width="10" height="12"><path d="M0 2H10M3.5 2V0.8H6.5V2" stroke="#8a8a8a" stroke-width="1" fill="none"/><path d="M1.2 3V11H8.8V3M3.8 4V10M6.2 4V10" stroke="#8a8a8a" stroke-width="1.1" fill="none"/></svg>
<div class="a" style="left:0;top:488.5px;width:690px;height:2px;background:#3a3a3a"></div>
<div class="a" style="left:290px;top:0;width:202px;height:492px;background:#f0f0f0"></div>
<div class="a" style="left:289.6px;top:0;width:1.4px;height:492px;background:#9a9a9a"></div>
<div class="a" style="left:291px;top:0;width:1px;height:492px;background:#f8f8f8"></div>
<div class="a" style="left:490.8px;top:0;width:1.7px;height:492px;background:#2a2a2e"></div>
<div class="a" style="left:492.5px;top:0;width:1.2px;height:492px;background:rgba(0,0,0,0.18)"></div>
<div class="t" style="left:308.5px;top:6.60px;font-size:11px;color:#1e1e1e;letter-spacing:-0.25px">New Layer...</div>
<div class="t" style="right:215px;top:6.60px;font-size:11px;color:#1e1e1e;letter-spacing:0.2px">Shift+Ctrl+N</div>
<div class="t" style="left:308.5px;top:23.61px;font-size:11px;color:#8e8e8e;letter-spacing:-0.25px">Copy CSS</div>
<div class="t" style="left:308.5px;top:40.62px;font-size:11px;color:#8e8e8e;letter-spacing:-0.25px">Copy SVG</div>
<div class="t" style="left:308.5px;top:57.63px;font-size:11px;color:#1e1e1e;letter-spacing:-0.25px">Duplicate Layer...</div>
<div class="t" style="left:308.5px;top:74.64px;font-size:11px;color:#8e8e8e;letter-spacing:-0.25px">Delete Layer</div>
<div class="t" style="left:308.5px;top:91.65px;font-size:11px;color:#8e8e8e;letter-spacing:-0.25px">Delete Hidden Layers</div>
<div class="a" style="left:293px;top:110.14px;width:196px;height:1px;background:#cdcdcd"></div>
<div class="t" style="left:308.5px;top:118.90px;font-size:11px;color:#1e1e1e;letter-spacing:-0.25px">Quick Export as PNG</div>
<div class="t" style="right:215px;top:118.90px;font-size:11px;color:#1e1e1e;letter-spacing:0.2px">Shift+Ctrl+'</div>
<div class="t" style="left:308.5px;top:135.91px;font-size:11px;color:#1e1e1e;letter-spacing:-0.25px">Export As...</div>
<div class="t" style="right:215px;top:135.91px;font-size:11px;color:#1e1e1e;letter-spacing:0.2px">Alt+Shift+Ctrl+'</div>
<div class="a" style="left:293px;top:154.31px;width:196px;height:1px;background:#cdcdcd"></div>
<div class="t" style="left:308.5px;top:163.16px;font-size:11px;color:#1e1e1e;letter-spacing:-0.25px">New Group...</div>
<div class="t" style="left:308.5px;top:180.17px;font-size:11px;color:#8e8e8e;letter-spacing:-0.25px">New Group from Layers...</div>
<div class="t" style="left:308.5px;top:197.18px;font-size:11px;color:#1e1e1e;letter-spacing:-0.25px">Collapse All Groups</div>
<div class="a" style="left:293px;top:215.45px;width:196px;height:1px;background:#cdcdcd"></div>
<div class="t" style="left:308.5px;top:224.43px;font-size:11px;color:#1e1e1e;letter-spacing:-0.25px">New Artboard...</div>
<div class="t" style="left:308.5px;top:241.44px;font-size:11px;color:#8e8e8e;letter-spacing:-0.25px">Artboard from Group...</div>
<div class="t" style="left:308.5px;top:258.45px;font-size:11px;color:#1e1e1e;letter-spacing:-0.25px">Artboard from Layers...</div>
<div class="t" style="left:308.5px;top:275.46px;font-size:11px;color:#8e8e8e;letter-spacing:-0.25px">Frame from Layers...</div>
<div class="t" style="left:308.5px;top:292.47px;font-size:11px;color:#8e8e8e;letter-spacing:-0.25px">Convert to Frame</div>
<div class="a" style="left:293px;top:310.54px;width:196px;height:1px;background:#cdcdcd"></div>
<div class="t" style="left:308.5px;top:319.72px;font-size:11px;color:#8e8e8e;letter-spacing:-0.25px">Lock Layers...</div>
<div class="t" style="right:215px;top:319.72px;font-size:11px;color:#8e8e8e;letter-spacing:0.2px">Ctrl+/</div>
<div class="a" style="left:293px;top:337.73px;width:196px;height:1px;background:#cdcdcd"></div>
<div class="t" style="left:308.5px;top:346.97px;font-size:11px;color:#1e1e1e;letter-spacing:-0.25px">Convert to Smart Object</div>
<div class="t" style="left:308.5px;top:363.98px;font-size:11px;color:#8e8e8e;letter-spacing:-0.25px">Edit Contents</div>
<div class="t" style="left:308.5px;top:380.99px;font-size:11px;color:#8e8e8e;letter-spacing:-0.25px">Convert to Layers</div>
<div class="a" style="left:293px;top:398.87px;width:196px;height:1px;background:#cdcdcd"></div>
<div class="t" style="left:308.5px;top:408.24px;font-size:11px;color:#8e8e8e;letter-spacing:-0.25px">Blending Options...</div>
<div class="t" style="left:308.5px;top:425.25px;font-size:11px;color:#8e8e8e;letter-spacing:-0.25px">Edit Adjustment...</div>
<div class="a" style="left:293px;top:443.04px;width:196px;height:1px;background:#cdcdcd"></div>
<div class="t" style="left:308.5px;top:452.50px;font-size:11px;color:#8e8e8e;letter-spacing:-0.25px">Create Clipping Mask</div>
<div class="t" style="right:215px;top:452.50px;font-size:11px;color:#8e8e8e;letter-spacing:0.2px">Alt+Ctrl+G</div>
<div class="a" style="left:293px;top:470.23px;width:196px;height:1px;background:#cdcdcd"></div>
<div class="t" style="left:308.5px;top:479.75px;font-size:11px;color:#8e8e8e;letter-spacing:-0.25px">Link Layers</div>
<div class="a" style="left:292px;top:0.5px;width:199px;height:23px;border:3px solid #ff0000"></div>
<div class="a" style="left:0;top:0;width:690px;height:1px;background:#1a1a1a"></div>
<div class="a" style="left:0;top:490.5px;width:690px;height:1.5px;background:#111"></div>
</body></html>
